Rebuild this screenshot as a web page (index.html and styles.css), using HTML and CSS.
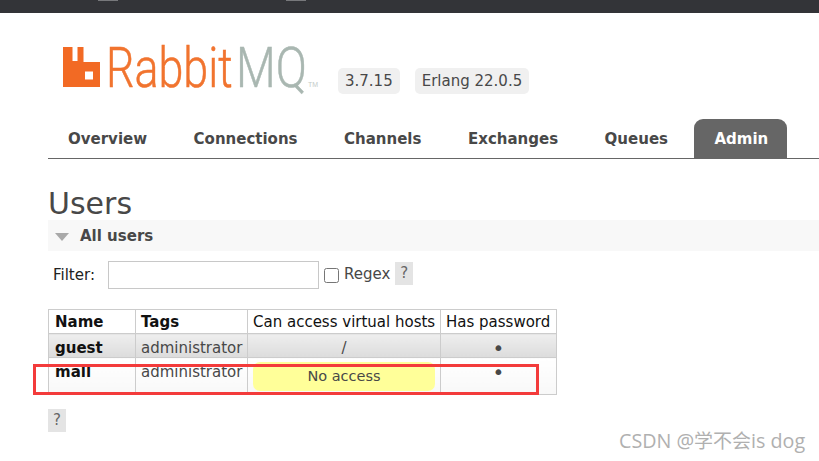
FILE: index.html
```html
<!DOCTYPE html>
<html lang="en">
<head>
    <meta charset="UTF-8">
    <title>RabbitMQ Management</title>
    <link rel="stylesheet" href="styles.css">
</head>
<body>
    <!-- browser bar cut off at the top -->
    <div class="top-bar">
        <span class="top-mark"></span>
        <span class="top-mark"></span>
    </div>

    <div class="header">
        <svg class="logo" width="262" height="56" viewBox="0 0 262 56">
            <path fill="#f26a24" fill-rule="evenodd" d="M0 2h9.500v14h5V2H20.500v15H37V42H0ZM22 26.500v8h8v-8Z"/>
            <text class="logo-text" transform="translate(43 42) scale(.8 1)" fill="#f1742f" stroke="#f1742f">Rabbit</text>
            <text class="logo-text" transform="translate(173 42) scale(.82 1)" fill="#a9b7b1" stroke="#a9b7b1">MQ</text>
            <text class="logo-tm" x="245" y="42" fill="#c4cbc8">TM</text>
        </svg>
        <span class="version">3.7.15</span>
        <span class="version">Erlang 22.0.5</span>
    </div>

    <ul class="nav">
        <li>Overview</li>
        <li>Connections</li>
        <li>Channels</li>
        <li>Exchanges</li>
        <li>Queues</li>
        <li class="active">Admin</li>
    </ul>

    <div class="main">
        <h1>Users</h1>
        <div class="section-title"><span class="arrow"></span>All users</div>

        <div class="filter">
            <label for="filter">Filter:</label>
            <input type="text" id="filter">
            <input type="checkbox" id="regex">
            <label class="regex-label" for="regex">Regex</label>
            <span class="help">?</span>
        </div>

        <table>
            <thead>
                <tr>
                    <th class="bold">Name</th>
                    <th class="bold">Tags</th>
                    <th>Can access virtual hosts</th>
                    <th>Has password</th>
                </tr>
            </thead>
            <tbody>
                <tr class="row-grey">
                    <td class="bold name">guest</td>
                    <td>administrator</td>
                    <td class="center">/</td>
                    <td class="center"><span class="dot">•</span></td>
                </tr>
                <tr class="row-white">
                    <td class="bold name">mall</td>
                    <td>administrator</td>
                    <td class="center cell-warn"><span class="warning">No access</span></td>
                    <td class="center"><span class="dot">•</span></td>
                </tr>
            </tbody>
        </table>

        <span class="help help-bottom">?</span>
    </div>

    <!-- annotation drawn on the screenshot -->
    <div class="red-box"></div>
    <div class="watermark">CSDN @<span class="watermark-cjk">学不会</span>is dog</div>
</body>
</html>
```

FILE: styles.css
```css
html, body {
    margin: 0;
    padding: 0;
}
body {
    width: 819px;
    height: 461px;
    overflow: hidden;
    position: relative;
    background: #fff;
    color: #484848;
    font-family: "DejaVu Sans", sans-serif;
    font-size: 15px;
}
/* top bar */
.top-bar {
    height: 13px;
    background: #333438;
    display: flex;
    gap: 168px;
    padding-left: 98px;
}
.top-mark {
    width: 20px;
    height: 1px;
    background: #77787b;
}
/* logo and versions */
.header {
    display: flex;
    align-items: flex-start;
    height: 106px;
    padding-left: 63px;
    box-sizing: border-box;
    padding-top: 32px;
}
.logo {
    display: block;
    margin-right: 13px;
    overflow: visible;
}
.logo-text {
    font-family: "Roboto", sans-serif;
    font-weight: 300;
    font-size: 56px;
    stroke-width: .5px;
}
.logo-tm {
    font-family: "Liberation Sans", sans-serif;
    font-size: 7px;
}
.version {
    margin-top: 23px;
    margin-right: 15px;
    padding: 0 7px;
    height: 26px;
    line-height: 26px;
    background: #f0f0f0;
    border-radius: 5px;
    color: #484848;
}
/* tabs */
.nav {
    list-style: none;
    margin: 0 0 0 48px;
    padding: 0 0 0 20px;
    height: 39px;
    display: flex;
    gap: 46.500px;
    border-bottom: 1px solid #666;
}
.nav li {
    font-weight: bold;
    line-height: 40px;
    white-space: nowrap;
}
.nav .active {
    background: #666;
    color: #fff;
    border-radius: 9px 9px 0 0;
    padding: 0 19px 0 20px;
    margin-left: -20px;
}
/* content */
.main {
    padding-left: 48px;
}
h1 {
    margin: 25px 0 0;
    height: 36px;
    font-size: 30px;
    line-height: 40px;
    font-weight: normal;
    color: #484848;
}
.section-title {
    height: 31px;
    box-sizing: border-box;
    padding-top: 2px;
    line-height: 29px;
    background: #f8f8f8;
    font-weight: bold;
    display: flex;
    align-items: center;
}
.arrow {
    width: 0;
    height: 0;
    margin: 0 11px 0 7px;
    border-left: 7px solid transparent;
    border-right: 7px solid transparent;
    border-top: 8px solid #a9a9a9;
}
.filter {
    display: flex;
    align-items: center;
    height: 28px;
    margin-top: 10px;
    padding-left: 5px;
}
.filter label {
    color: #222;
}
.filter input[type="text"] {
    width: 211px;
    height: 28px;
    box-sizing: border-box;
    margin: 0 0 0 13px;
    border: 1px solid #c8c8c8;
}
.filter input[type="checkbox"] {
    width: 15px;
    height: 15px;
    margin: 0 5px 0;
}
.filter .regex-label {
    color: #484848;
    margin-bottom: 2px;
}
.help {
    display: inline-block;
    width: 18px;
    height: 23px;
    line-height: 23px;
    text-align: center;
    background: #e4e4e4;
    color: #666;
    font-size: 15px;
}
.filter .help {
    margin-left: 5px;
    margin-bottom: 3px;
}
/* table */
table {
    border-collapse: collapse;
    margin-top: 20px;
    width: 509px;
    table-layout: fixed;
}
th, td {
    border: 1px solid #ccc;
    padding: 5px 5px 0;
    font-weight: normal;
    text-align: left;
    white-space: nowrap;
    vertical-align: top;
}
th {
    height: 22px;
    padding: 1px 5px 0;
    line-height: 22px;
    color: #111;
}
th:nth-child(1) { width: 75px; padding-left: 6px; }
th:nth-child(2) { width: 101px; }
th:nth-child(3) { width: 182px; }
td:first-child { padding-left: 6px; }
td {
    line-height: 18px;
}
.row-grey td {
    height: 18px;
    background: linear-gradient(#eee, #dcdcdc);
}
.row-white td {
    height: 31px;
    background: linear-gradient(#fff, #f8f8f8);
}
th.bold, td.bold {
    font-weight: bold;
    color: #111;
}
.center {
    text-align: center;
}
.row-white td.cell-warn {
    height: 31px;
    padding: 4px 5px 1px;
}
.dot {
    display: block;
    height: 18px;
    font-size: 20px;
    line-height: 18px;
}
.warning {
    display: block;
    height: 29px;
    line-height: 29px;
    background: #ffff99;
    border-radius: 7px;
    font-size: 14.500px;
}
.help-bottom {
    display: block;
    margin-top: 14px;
}
/* overlays */
.red-box {
    position: absolute;
    left: 33px;
    top: 364px;
    width: 500px;
    height: 25px;
    border: 3px solid #f33b3b;
}
.watermark {
    position: absolute;
    left: 619px;
    top: 426px;
    font-family: "Open Sans", "Noto Sans CJK SC", sans-serif;
    font-size: 19.700px;
    color: #b0b0b0;
    white-space: nowrap;
}
.watermark-cjk {
    font-size: 19px;
}
```
